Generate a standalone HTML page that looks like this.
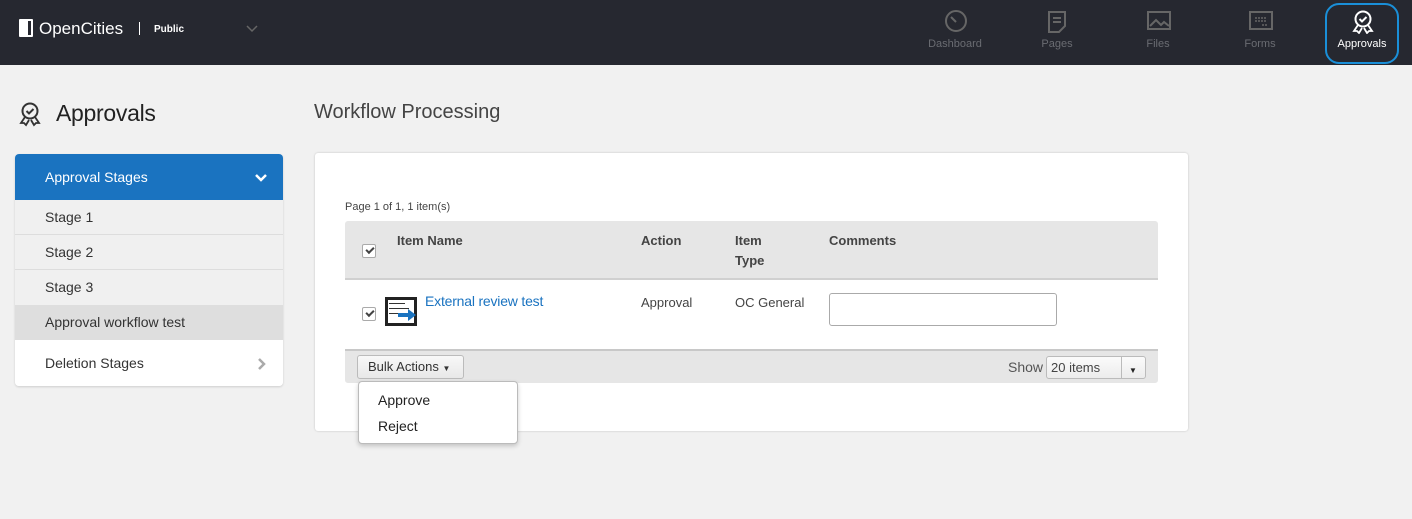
<!DOCTYPE html>
<html><head><meta charset="utf-8"><style>
*{box-sizing:border-box;margin:0;padding:0}
body{width:1412px;height:519px;background:#f1f1f1;font-family:"Liberation Sans",Arial,sans-serif;position:relative;overflow:hidden;color:#333}
.top{position:absolute;left:0;top:0;width:1412px;height:65px;background:#262830}
.abs{position:absolute}
.nav{position:absolute;top:0;width:100px;height:65px;text-align:center;color:#6a6c72;font-size:11px}
.nav svg{position:absolute;left:39px;top:10px}
.nav span{position:absolute;left:0;right:0;top:38px}
.side{position:absolute;left:15px;top:154px;width:268px;height:232px;background:#fff;border-radius:4px;overflow:hidden;box-shadow:0 1px 2px rgba(0,0,0,.15)}
.side div{position:absolute;left:0;width:268px;padding-left:30px;font-size:14px;color:#333}
.card{position:absolute;left:315px;top:153px;width:873px;height:278px;background:#fff;border-radius:3px;box-shadow:0 0 2px rgba(0,0,0,.2)}
.cb{position:absolute;width:14px;height:14px;border:1px solid #aaa;background:#fff;border-radius:2px}
.cb:after{content:"";position:absolute;left:3px;top:2px;width:6px;height:3px;border-left:2px solid #444;border-bottom:2px solid #444;transform:rotate(-45deg)}
.th{position:absolute;font-size:13px;font-weight:bold;color:#444;line-height:20px}
.td{position:absolute;font-size:13px;color:#444}
</style></head><body>
<div class="top"></div>
<div class="abs" style="left:19px;top:19px;width:14px;height:18px;background:#fff;border-radius:1px"></div>
<div class="abs" style="left:28px;top:21px;width:3px;height:14px;background:#262830"></div>
<div class="abs" style="left:39px;top:19px;color:#fff;font-size:17px">OpenCities</div>
<div class="abs" style="left:139px;top:22px;width:1px;height:13px;background:#fff"></div>
<div class="abs" style="left:154px;top:24px;color:#fff;font-size:10px;font-weight:bold">Public</div>
<svg class="abs" style="left:246px;top:25px" width="12" height="8"><path d="M1 1l5 5 5-5" stroke="#666" stroke-width="1.5" fill="none"/></svg>

<div class="nav" style="left:905px"><svg width="24" height="22"><circle cx="12" cy="11" r="10" stroke="#666" stroke-width="2" fill="none"/><path d="M7 7l5 5" stroke="#666" stroke-width="2"/></svg><span>Dashboard</span></div>
<div class="nav" style="left:1007px"><svg width="22" height="24"><path d="M3 2h16v14l-6 6H3z" stroke="#666" stroke-width="2" fill="none"/><path d="M7 8h8M7 12h8" stroke="#666" stroke-width="2"/></svg><span>Pages</span></div>
<div class="nav" style="left:1108px"><svg width="24" height="22"><rect x="1" y="2" width="22" height="17" stroke="#666" stroke-width="2" fill="none"/><path d="M3 16l6-6 5 5 3-3 5 4" stroke="#666" stroke-width="2" fill="none"/></svg><span>Files</span></div>
<div class="nav" style="left:1210px"><svg width="24" height="22"><rect x="1" y="2" width="22" height="17" stroke="#666" stroke-width="2" fill="none"/><path d="M6 8h12M6 11h12M13 15h5" stroke="#666" stroke-width="1.5" stroke-dasharray="2 1"/></svg><span>Forms</span></div>
<div class="abs" style="left:1325px;top:3px;width:74px;height:61px;border:2px solid #1a8fd8;border-radius:14px"></div>
<div class="nav" style="left:1312px;color:#fff"><svg width="24" height="24"><circle cx="12" cy="9" r="7.5" stroke="#fff" stroke-width="2" fill="none"/><path d="M8.5 9l2.5 2.5 4.5-4.5" stroke="#fff" stroke-width="2" fill="none"/><path d="M7 15l-4 6 3 0 2 2 3-5M17 15l4 6-3 0-2 2-3-5" stroke="#fff" stroke-width="1.8" fill="none"/></svg><span>Approvals</span></div>

<svg class="abs" style="left:18px;top:102px" width="24" height="26"><circle cx="12" cy="9" r="7.5" stroke="#333" stroke-width="2" fill="none"/><path d="M8.5 9l2.5 2.5 4.5-4.5" stroke="#333" stroke-width="2" fill="none"/><path d="M7 15l-4 6 3 0 2 2 3-5M17 15l4 6-3 0-2 2-3-5" stroke="#333" stroke-width="1.8" fill="none"/></svg>
<div class="abs" style="left:56px;top:100px;font-size:23px;color:#222;letter-spacing:-0.3px">Approvals</div>
<div class="abs" style="left:314px;top:101px;font-size:20px;color:#444">Workflow Processing</div>

<div class="side">
<div style="top:0;height:46px;background:#1a73c0;color:#fff;line-height:46px">Approval Stages</div>
<svg class="abs" style="left:240px;top:20px" width="12" height="8"><path d="M1 1l5 5 5-5" stroke="#fff" stroke-width="2.5" fill="none"/></svg>
<div style="top:46px;height:35px;line-height:35px;background:#f0f0f0;border-bottom:1px solid #ddd">Stage 1</div>
<div style="top:81px;height:35px;line-height:35px;background:#f0f0f0;border-bottom:1px solid #ddd">Stage 2</div>
<div style="top:116px;height:35px;line-height:35px;background:#f0f0f0">Stage 3</div>
<div style="top:151px;height:35px;line-height:35px;background:#dedede">Approval workflow test</div>
<div style="top:186px;height:46px;line-height:46px;background:#fff">Deletion Stages</div>
<svg class="abs" style="left:243px;top:204px" width="8" height="12"><path d="M1 1l5 5-5 5" stroke="#aaa" stroke-width="2.5" fill="none"/></svg>
</div>

<div class="card"></div>
<div class="td" style="left:345px;top:201px;font-size:11px">Page 1 of 1, 1 item(s)</div>
<div class="abs" style="left:345px;top:221px;width:813px;height:59px;background:#e6e6e6;border-bottom:2px solid #d0d0d0;border-radius:3px 3px 0 0"></div>
<div class="cb" style="left:362px;top:244px"></div>
<div class="th" style="left:397px;top:231px">Item Name</div>
<div class="th" style="left:641px;top:231px">Action</div>
<div class="th" style="left:735px;top:231px">Item<br>Type</div>
<div class="th" style="left:829px;top:231px">Comments</div>
<div class="cb" style="left:362px;top:307px"></div>
<div class="abs" style="left:385px;top:297px;width:32px;height:29px;border:3px solid #222;background:#fff"></div>
<div class="abs" style="left:389px;top:303px;width:16px;height:1px;background:#333"></div>
<div class="abs" style="left:389px;top:308px;width:20px;height:1px;background:#333"></div>
<div class="abs" style="left:389px;top:313px;width:12px;height:1px;background:#333"></div>
<svg class="abs" style="left:398px;top:309px" width="19" height="12"><path d="M0 4h10V0l8 6-8 6V8H0z" fill="#1a73c0"/></svg>
<div class="td" style="left:425px;top:293px;color:#1a73c0;font-size:14px;letter-spacing:-0.2px">External review test</div>
<div class="td" style="left:641px;top:295px">Approval</div>
<div class="td" style="left:735px;top:295px">OC General</div>
<div class="abs" style="left:829px;top:293px;width:228px;height:33px;border:1px solid #aaa;border-radius:3px"></div>
<div class="abs" style="left:345px;top:349px;width:813px;height:34px;background:#e6e6e6;border-top:2px solid #c8c8c8;border-radius:0 0 3px 3px"></div>
<div class="abs" style="left:357px;top:355px;width:107px;height:24px;border:1px solid #bbb;border-radius:3px;background:linear-gradient(#f8f8f8,#e8e8e8);font-size:13px;line-height:22px;padding-left:10px;color:#333">Bulk Actions <span style="font-size:8px">▼</span></div>
<div class="td" style="left:1008px;top:359px;font-size:14px;color:#555">Show</div>
<div class="abs" style="left:1046px;top:356px;width:100px;height:23px;border:1px solid #bbb;border-radius:3px;background:linear-gradient(#fbfbfb,#ececec);font-size:13px;line-height:21px;padding-left:4px;color:#444">20 items</div>
<div class="abs" style="left:1121px;top:356px;width:1px;height:23px;background:#bbb"></div>
<div class="abs" style="left:1129px;top:366px;font-size:8px;color:#222">▼</div>
<div class="abs" style="left:358px;top:381px;width:160px;height:63px;background:#fff;border:1px solid #bbb;border-radius:4px;box-shadow:0 2px 5px rgba(0,0,0,.2)"></div>
<div class="td" style="left:378px;top:392px;font-size:14px;color:#222">Approve</div>
<div class="td" style="left:378px;top:418px;font-size:14px;color:#222">Reject</div>
</body></html>
